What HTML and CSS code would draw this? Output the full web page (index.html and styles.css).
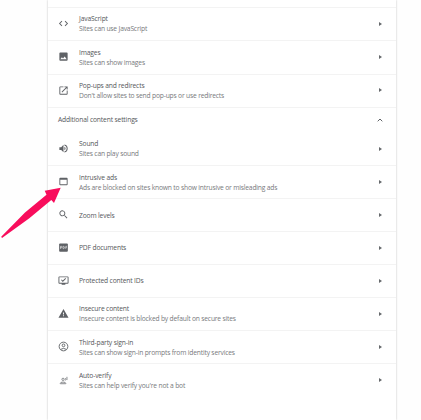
FILE: index.html
```html
<!DOCTYPE html>
<html lang="en">
<head>
<meta charset="utf-8">
<title>Site settings</title>
<link rel="stylesheet" href="styles.css">
</head>
<body>
<main class="panel">
  <div class="row"><svg class="icon" viewBox="0 0 24 24"><path d="M9.4 16.6 4.8 12l4.6-4.6L8 6l-6 6 6 6zm5.2 0 4.6-4.6-4.6-4.6L16 6l6 6-6 6z"/></svg><div class="text"><div class="title">JavaScript</div><div class="sub">Sites can use JavaScript</div></div><i class="arrow"></i></div>
  <div class="row"><svg class="icon" viewBox="0 0 24 24"><path d="M21 19V5a2 2 0 0 0-2-2H5a2 2 0 0 0-2 2v14a2 2 0 0 0 2 2h14a2 2 0 0 0 2-2zM8.500 13.500l2.500 3 3.500-4.500 4.500 6H5z"/></svg><div class="text"><div class="title">Images</div><div class="sub">Sites can show images</div></div><i class="arrow"></i></div>
  <div class="row"><svg class="icon" viewBox="0 0 24 24"><path d="M19 19H5V5h7V3H5a2 2 0 0 0-2 2v14a2 2 0 0 0 2 2h14a2 2 0 0 0 2-2v-7h-2zM14 3v2h3.600l-9.800 9.800 1.400 1.400L19 6.400V10h2V3z"/></svg><div class="text"><div class="title">Pop-ups and redirects</div><div class="sub">Don't allow sites to send pop-ups or use redirects</div></div><i class="arrow"></i></div>
  <div class="heading"><h2>Additional content settings</h2><svg class="chevron" viewBox="0 0 6 4"><path d="M.7 3.300 3 1l2.300 2.300"/></svg></div>
  <div class="row first"><svg class="icon" viewBox="0 0 24 24"><path d="M3 9v6h4l5 5V4L7 9zm13.500 3A4.500 4.500 0 0 0 14 8v8a4.500 4.500 0 0 0 2.500-4zM14 3.200v2.100a7 7 0 0 1 0 13.400v2.100a9 9 0 0 0 0-17.600z"/></svg><div class="text"><div class="title">Sound</div><div class="sub">Sites can play sound</div></div><i class="arrow"></i></div>
  <div class="row"><svg class="icon" viewBox="0 0 24 24"><path d="M19 4H5a2 2 0 0 0-2 2v12a2 2 0 0 0 2 2h14a2 2 0 0 0 2-2V6a2 2 0 0 0-2-2zm0 14H5V8h14z"/></svg><div class="text"><div class="title">Intrusive ads</div><div class="sub">Ads are blocked on sites known to show intrusive or misleading ads</div></div><i class="arrow"></i></div>
  <div class="row single"><svg class="icon" viewBox="0 0 24 24"><path d="M15.500 14h-.8l-.3-.3a6.500 6.500 0 1 0-.7.7l.3.3v.8l5 5 1.500-1.500zm-6 0a4.500 4.500 0 1 1 0-9 4.500 4.500 0 0 1 0 9z"/></svg><div class="text"><div class="title">Zoom levels</div></div><i class="arrow"></i></div>
  <div class="row single"><svg class="icon" viewBox="0 0 24 24"><rect x="2.500" y="3" width="19" height="18" rx="2"/><path class="cut" d="M5.500 15V9.500h2a1.500 1.500 0 0 1 0 3h-2M11 9.500h1q2 0 2 2.500t-2 2.500h-1zM17 15V9.500h2.500M17 12h2"/></svg><div class="text"><div class="title">PDF documents</div></div><i class="arrow"></i></div>
  <div class="row single"><svg class="icon" viewBox="0 0 24 24"><path d="M21 3H3a2 2 0 0 0-2 2v12a2 2 0 0 0 2 2h5v2h8v-2h5a2 2 0 0 0 2-2V5a2 2 0 0 0-2-2zm0 14H3V5h18zM17.500 8l-1.400-1.400-5.600 5.600L8 9.700l-1.400 1.400L10.500 15z"/></svg><div class="text"><div class="title">Protected content IDs</div></div><i class="arrow"></i></div>
  <div class="row"><svg class="icon" viewBox="0 0 24 24"><path d="M1 21h22L12 2zm12-3h-2v-2h2zm0-4h-2v-4h2z"/></svg><div class="text"><div class="title">Insecure content</div><div class="sub">Insecure content is blocked by default on secure sites</div></div><i class="arrow"></i></div>
  <div class="row"><svg class="icon" viewBox="0 0 24 24"><g class="line"><circle cx="12" cy="12" r="9.500"/><circle cx="12" cy="9.500" r="3"/><path d="M5.500 18.500q6.500-5 13 0"/></g></svg><div class="text"><div class="title">Third-party sign-in</div><div class="sub">Sites can show sign-in prompts from identity services</div></div><i class="arrow"></i></div>
  <div class="row"><svg class="icon faint" viewBox="0 0 24 24"><g class="line"><circle cx="11" cy="9.500" r="2.500"/><path d="M5 19v-1q0-2.500 6-2.500t6 2.500v1zM16 7q2 2.500 0 5M19.500 4v7"/></g></svg><div class="text"><div class="title">Auto-verify</div><div class="sub">Sites can help verify you're not a bot</div></div><i class="arrow"></i></div>
</main>
<svg class="pointer" viewBox="0 0 64 54"><path d="M1.200 51.800 25 27.500 46.500 9.700 44.700 5.700 60.700 2.700 54 18 51.300 15 29 33.500 2 53Z"/></svg>
</body>
</html>
```
FILE: styles.css
```css
* { box-sizing: border-box; }
body {
  margin: 0;
  height: 420px;
  overflow: hidden;
  background: #fefefe;
  font-family: "Open Sans", "Noto Sans", sans-serif;
  color: #55575a;
}
.panel {
  width: 348px;
  height: 420px;
  margin-left: 48px;
  padding-top: 7px;
  background: #fff;
  box-shadow: 0 0 2px #c0c0c0;
}
.row {
  display: flex;
  align-items: center;
  height: 33.3px;
  padding: 0 14px 0 10px;
  border-top: 1px solid #f3f3f3;
}
.row.single { height: 32.8px; }
.row.first { border-top-color: transparent; }
.icon {
  flex: none;
  width: 11px;
  height: 11px;
  margin: 0 10px 1px 0;
  fill: #5f6266;
}
.line { fill: none; stroke: #5f6266; stroke-width: 2; }
.cut { fill: none; stroke: #fff; stroke-width: 1.2; }
.faint { opacity: .8; }
.text {
  flex: 1;
  padding-top: .4px;
  white-space: nowrap;
  font-size: 6.7px;
  line-height: 10px;
  letter-spacing: -.15px;
}
.sub { color: #77797c; letter-spacing: -.175px; }
.arrow {
  margin-bottom: .5px;
  border-left: 3px solid #66696c;
  border-top: 2.5px solid transparent;
  border-bottom: 2.5px solid transparent;
}
.heading {
  display: flex;
  align-items: center;
  justify-content: space-between;
  height: 25px;
  padding: 0 13px 0 10px;
  border-top: 1px solid #f3f3f3;
}
h2 {
  margin: 0;
  font-size: 6.7px;
  font-weight: 400;
  line-height: 10px;
  letter-spacing: -.14px;
}
.chevron { width: 6px; height: 4px; fill: none; stroke: #5f6266; }
.pointer {
  position: absolute;
  left: 0;
  top: 185px;
  width: 64px;
  height: 54px;
  fill: #f80d5c;
}
```
